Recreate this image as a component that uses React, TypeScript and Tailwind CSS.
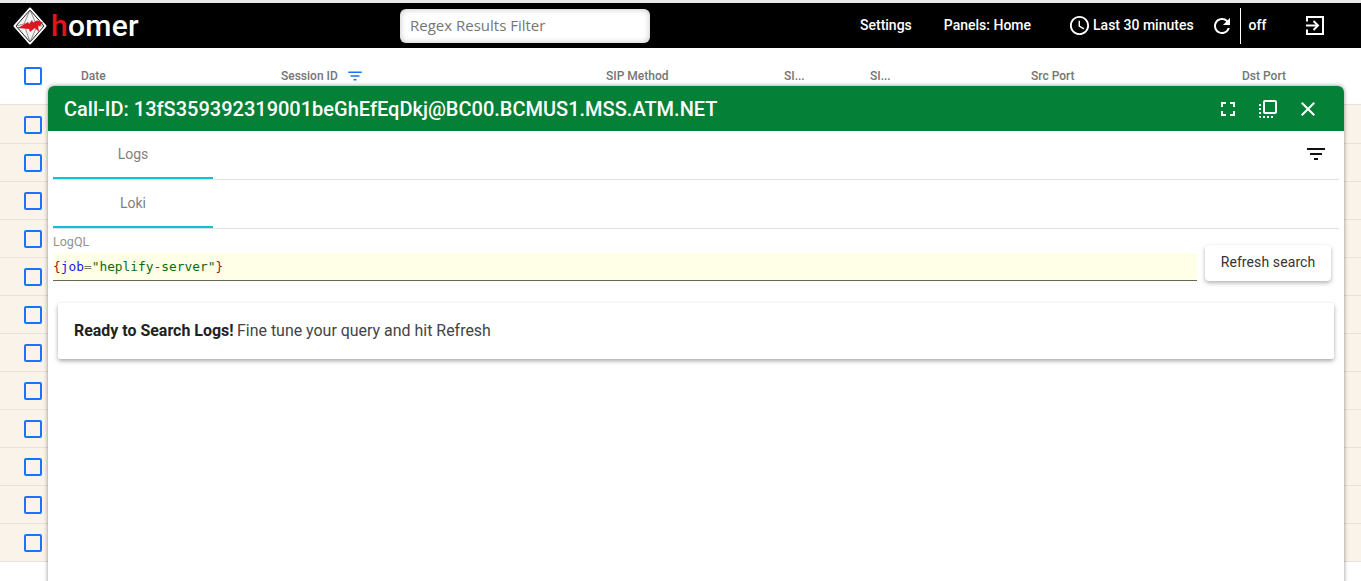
import React from 'react';
import {
  MdAccessTime,
  MdClose,
  MdFilterList,
  MdFlipToFront,
  MdFullscreen,
  MdRefresh,
} from 'react-icons/md';

const rowCount = 12;

function Checkbox() {
  return <div className="size-[18px] shrink-0 rounded-[2px] border-2 border-[#1a73ff] bg-transparent"></div>;
}

function HomerLogo() {
  return (
    <svg width="34" height="38" viewBox="0 0 34 38" className="shrink-0">
      <path d="M17 1.5 L32.5 19 L17 36.5 L1.5 19 Z" fill="#fff" stroke="#fff" strokeWidth="2" strokeLinejoin="round" />
      <path d="M17 3 L31 19 L17 35 L3 19 Z" fill="#f4f4f4" stroke="#222" strokeWidth="1" strokeLinejoin="round" />
      <path d="M17 3 L24 19 L17 35 M17 3 L11 17 L17 35 M3 19 L11 17 L24 19 L31 19" fill="none" stroke="#666" strokeWidth="0.7" />
      <path
        d="M4 21 C9 19 12 17 15 15 L16 17 L19 13 L20 15.5 L24 13.5 L30 15.5 L27 19 L25 18.5 L26 25 L22 21 L17 25 L16 22 Z"
        fill="#d9181f"
      />
    </svg>
  );
}

function ExitIcon() {
  return (
    <svg width="18" height="19" viewBox="0 0 18 19" fill="none" stroke="currentColor" strokeWidth="2" className="ml-[40px] shrink-0">
      <path d="M1 5.5 V1 H17 V18 H1 V13.5" />
      <path d="M0 9.5 H11" />
      <path d="M7.5 5 L12 9.5 L7.5 14" />
    </svg>
  );
}

function TopBar() {
  return (
    <div className="mt-[3px] flex h-[45px] items-center bg-black font-['Roboto',sans-serif] text-white">
      <div className="ml-[13px] flex w-[387px] items-center gap-[4px]">
        <HomerLogo />
        <span className="text-[30px] leading-none font-medium tracking-[0.3px]">
          <span className="text-[#e2141c]">h</span>omer
        </span>
      </div>
      <div className="flex h-[34px] w-[250px] items-center rounded-[6px] bg-white px-[10px] font-['Open_Sans',sans-serif] text-[15px] text-[#757575] shadow-[inset_0_0_6px_rgba(0,0,0,0.25)]">
        Regex Results Filter
      </div>
      <span className="ml-[210px] text-[14px] font-medium">Settings</span>
      <span className="ml-[32px] text-[14px] font-medium">Panels: Home</span>
      <MdAccessTime className="ml-[37px] text-[23px]" />
      <span className="ml-[2px] text-[14px] font-medium">Last 30 minutes</span>
      <MdRefresh className="ml-[16px] text-[24px]" />
      <div className="ml-[6px] h-[36px] w-px bg-white"></div>
      <span className="ml-[8px] text-[14px] font-medium">off</span>
      <ExitIcon />
    </div>
  );
}

function TableHead() {
  return (
    <div className="flex h-[57px] items-center border-b border-[#e6e3df] pl-[24px] font-['Roboto',sans-serif] text-[12px] font-medium text-[#757575]">
      <Checkbox />
      <span className="ml-[39px] w-[200px]">Date</span>
      <span className="flex w-[325px] items-center">
        Session ID
        <MdFilterList className="ml-[8px] text-[18px] text-[#1a73ff]" />
      </span>
      <span className="w-[178px]">SIP Method</span>
      <span className="w-[86px]">SI...</span>
      <span className="w-[161px]">SI...</span>
      <span className="w-[211px]">Src Port</span>
      <span>Dst Port</span>
    </div>
  );
}

function TableRows() {
  return (
    <div className="bg-[#faf3ea] pt-px">
      {Array.from({ length: rowCount }, (_, i) => (
        <div key={i} className="flex h-[38px] items-center border-b border-[#e6e3df] pl-[24px]">
          <Checkbox />
        </div>
      ))}
    </div>
  );
}

function Tab({ label }: { label: string }) {
  return (
    <div className="border-b border-[#e0e0e0]">
      <div className="flex h-[48px] w-[160px] items-center justify-center border-b-2 border-[#12c0d6] text-[14px] text-[#808080]">
        {label}
      </div>
    </div>
  );
}

function CallModal() {
  return (
    <div className="absolute top-[86px] left-[48px] h-[520px] w-[1296px] rounded-t-[6px] bg-white font-['Roboto',sans-serif] shadow-[0_0_4px_rgba(0,0,0,0.45)]">
      <div className="flex h-[45px] items-center rounded-t-[6px] bg-[#048037] pr-[24px] pl-[16px] text-white">
        <h1 className="flex-1 text-[20px] font-medium">Call-ID: 13fS359392319001beGhEfEqDkj@BC00.BCMUS1.MSS.ATM.NET</h1>
        <MdFullscreen className="text-[24px]" />
        <MdFlipToFront className="ml-[16px] text-[24px]" />
        <MdClose className="ml-[16px] text-[24px]" />
      </div>
      <div className="px-[5px]">
        <div className="relative">
          <Tab label="Logs" />
          <MdFilterList className="absolute top-[11px] right-[11px] text-[24px] text-[#111]" />
        </div>
        <Tab label="Loki" />
        <div className="flex gap-[8px] pr-[8px]">
          <div className="flex-1">
            <div className="pt-[5px] text-[12.5px] leading-[16px] text-[#929292]">LogQL</div>
            <div className="mt-[3px] flex h-[28px] items-center border-b border-[#666655] bg-[#ffffe8] font-['DejaVu_Sans_Mono',monospace] text-[12.85px]">
              <span className="text-[#a31515]">{'{'}</span>
              <span className="text-[#1a1ae6]">job</span>
              <span className="text-[#777]">=</span>
              <span className="text-[#0b6b0b]">"heplify-server"</span>
              <span className="text-[#a31515]">{'}'}</span>
            </div>
          </div>
          <div className="mt-[16px] flex h-[36px] w-[126px] items-center justify-center rounded-[4px] bg-white pb-[2px] text-[14px] tracking-[0.1px] text-[#333] shadow-[0_2px_4px_rgba(0,0,0,0.3)]">
            Refresh search
          </div>
        </div>
        <div className="mx-[5px] mt-[22px] flex h-[56px] items-center rounded-[2px] px-[16px] text-[15.95px] text-[#444] shadow-[0_2px_4px_rgba(0,0,0,0.35)]">
          <strong className="mr-[3.5px] font-bold text-[#222]">Ready to Search Logs!</strong> Fine tune your query and hit Refresh
        </div>
      </div>
    </div>
  );
}

export default function App() {
  return (
    <div className="relative h-[581px] w-[1361px] overflow-hidden bg-white">
      <div className="absolute top-0 left-0 h-[3px] w-full bg-[#e8e8e8]"></div>
      <TopBar />
      <TableHead />
      <TableRows />
      <CallModal />
    </div>
  );
}
